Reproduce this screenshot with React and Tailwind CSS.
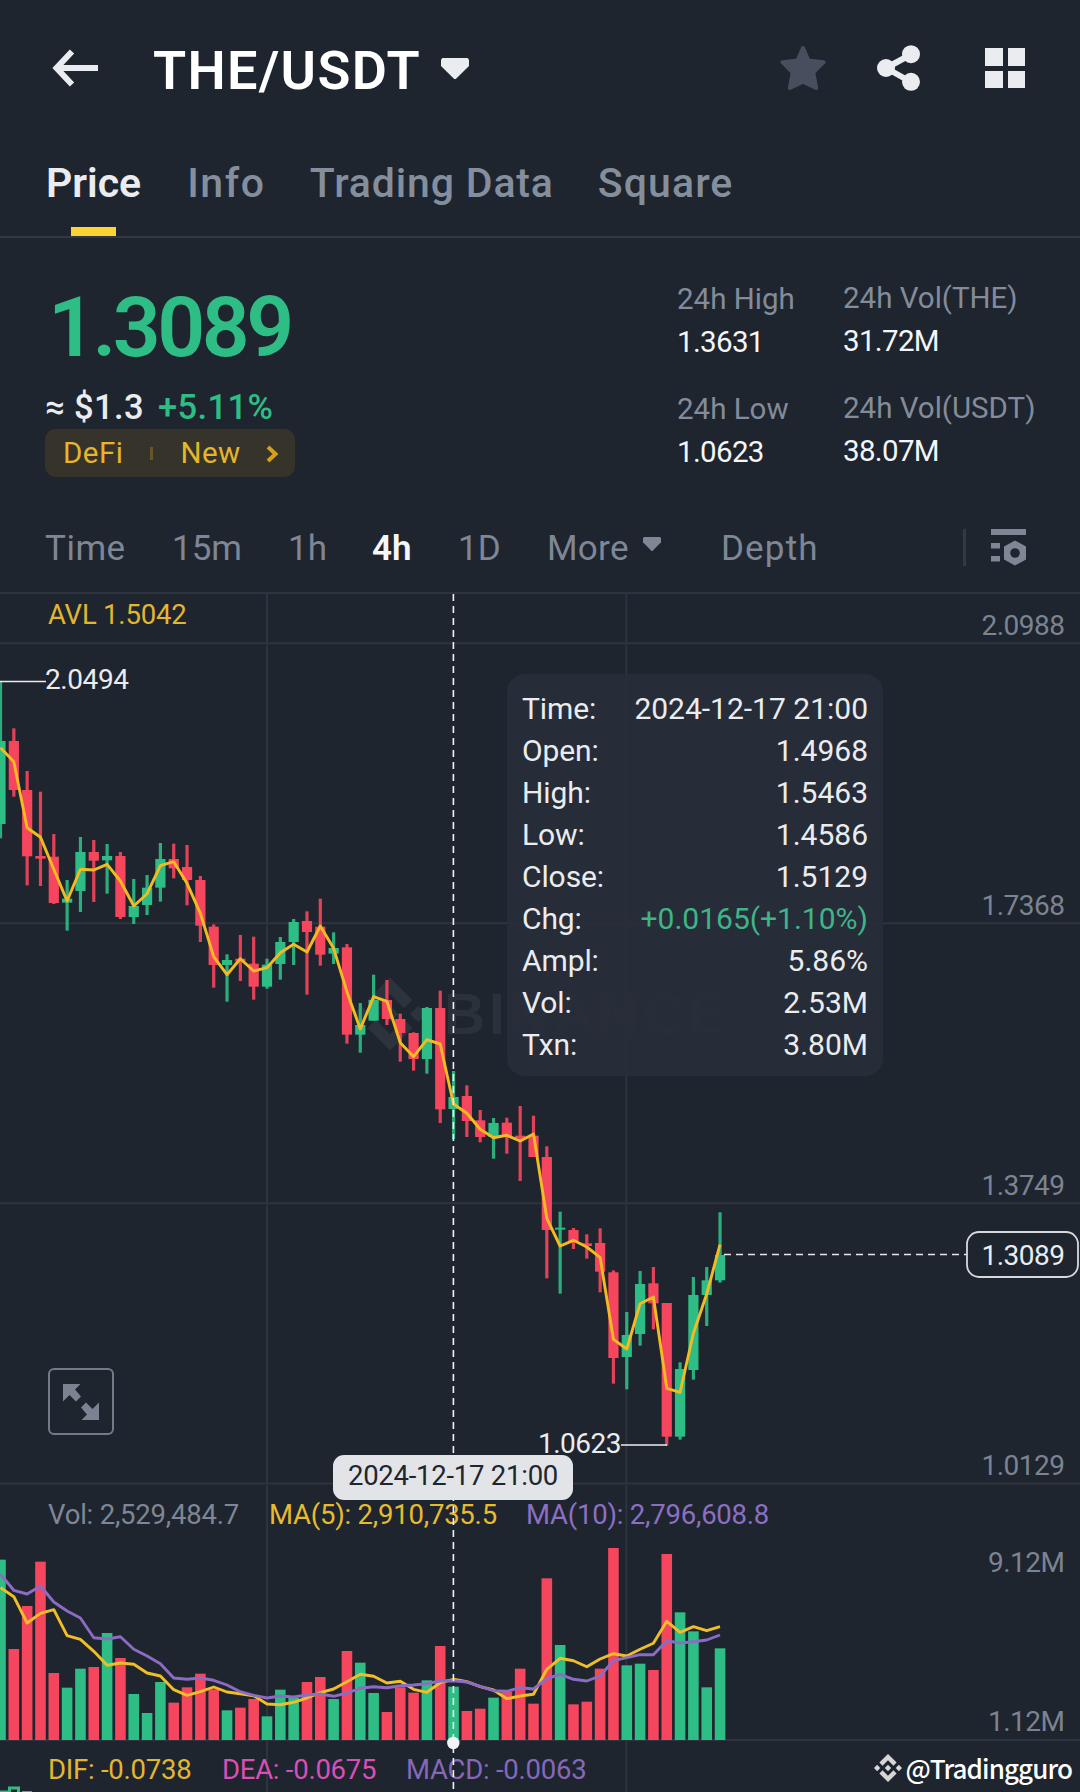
import React from "react";

// [direction, high, bodyTop, bodyBottom, low, average], in thirds of a pixel below y = 590
const CANDLES = [
  ["G", 275, 453, 702, 745, 473], ["R", 415, 453, 600, 620, 515], ["R", 543, 600, 799, 886, 713],
  ["R", 605, 798, 806, 888, 742], ["R", 732, 800, 939, 942, 838], ["G", 870, 926, 938, 1022, 933],
  ["G", 741, 786, 903, 966, 838], ["R", 750, 786, 812, 936, 840], ["G", 762, 798, 811, 911, 823],
  ["R", 786, 798, 981, 987, 873], ["G", 867, 948, 981, 1002, 948], ["G", 855, 893, 945, 975, 911],
  ["G", 759, 807, 893, 935, 827], ["R", 761, 807, 835, 865, 815], ["R", 765, 831, 870, 946, 880],
  ["R", 858, 870, 1007, 1056, 970], ["R", 1003, 1010, 1125, 1193, 1100], ["G", 1093, 1110, 1125, 1235, 1154],
  ["R", 1035, 1106, 1114, 1173, 1106], ["R", 1040, 1121, 1190, 1229, 1143], ["G", 1106, 1124, 1190, 1196, 1133],
  ["G", 1041, 1056, 1122, 1169, 1088], ["G", 987, 996, 1056, 1125, 1063], ["R", 964, 993, 1026, 1214, 1086],
  ["R", 926, 1010, 1094, 1127, 1008], ["G", 1027, 1074, 1091, 1122, 1075], ["R", 1062, 1072, 1334, 1361, 1205],
  ["G", 1239, 1305, 1334, 1388, 1317], ["G", 1154, 1230, 1292, 1292, 1220], ["R", 1170, 1230, 1287, 1305, 1234],
  ["R", 1271, 1287, 1329, 1415, 1358], ["R", 1327, 1329, 1407, 1442, 1400], ["G", 1251, 1254, 1407, 1451, 1349],
  ["R", 1202, 1254, 1558, 1599, 1362], ["G", 1443, 1521, 1557, 1647, 1542], ["R", 1486, 1518, 1593, 1641, 1570],
  ["R", 1560, 1591, 1641, 1657, 1618], ["G", 1584, 1599, 1641, 1706, 1643], ["R", 1583, 1598, 1638, 1691, 1636],
  ["R", 1548, 1637, 1645, 1773, 1653], ["R", 1577, 1637, 1701, 1701, 1632], ["R", 1669, 1701, 1920, 2065, 1885],
  ["G", 1865, 1913, 1919, 2111, 1968], ["R", 1914, 1920, 1955, 1977, 1951], ["R", 1933, 1960, 1968, 2006, 1971],
  ["R", 1915, 1959, 2045, 2107, 2002], ["R", 2041, 2047, 2304, 2381, 2248], ["G", 2166, 2235, 2301, 2398, 2277],
  ["G", 2043, 2082, 2232, 2267, 2141], ["R", 2031, 2080, 2140, 2218, 2121], ["R", 2139, 2139, 2540, 2567, 2395],
  ["G", 2317, 2337, 2540, 2549, 2407], ["G", 2061, 2115, 2340, 2369, 2230], ["G", 2031, 2071, 2115, 2208, 2112],
  ["G", 1867, 1995, 2071, 2078, 1964],
];

// Volume bar tops and the two moving averages, in thirds of a pixel below y = 1520
const VOLUME = [
  119, 387, 258, 125, 459, 503, 446, 441, 339, 414, 522, 579, 486, 548, 502, 461, 508, 571, 563, 537, 589, 509, 534,
  486, 471, 537, 393, 428, 519, 576, 502, 518, 481, 378, 500, 573, 566, 533, 515, 446, 551, 175, 375, 553, 545, 446,
  84, 436, 431, 450, 102, 277, 334, 502, 385,
];
const MA5 = [
  203, 230, 309, 280, 269, 347, 358, 394, 436, 429, 433, 459, 468, 509, 526, 515, 501, 516, 521, 527, 552, 554, 547,
  534, 518, 507, 485, 463, 469, 489, 484, 508, 517, 488, 478, 485, 500, 510, 536, 528, 523, 448, 415, 422, 440, 417,
  401, 408, 388, 370, 304, 337, 320, 332, 320,
];
const MA10 = [
  163, 211, 222, 198, 246, 273, 294, 353, 357, 350, 388, 408, 431, 474, 478, 474, 481, 495, 515, 526, 534, 528, 531,
  525, 522, 529, 519, 505, 500, 503, 497, 495, 491, 483, 482, 486, 499, 512, 514, 503, 507, 476, 463, 478, 483, 468,
  422, 413, 404, 404, 362, 369, 365, 360, 345,
];

const cx = (i) => 0.5 + i * 13.325;
const py = (v) => 590 + v / 3;
const vy = (v) => 1520 + v / 3;
const line = (values, fy) => values.map((v, i) => `${cx(i).toFixed(1)},${fy(v).toFixed(1)}`).join(" ");
const tone = (c) => (c === "G" ? "#2ebd85" : "#f6465d");

const MARK =
  "M38.700 53.200 63.300 28.600 87.900 53.200 102.200 38.900 63.300 0 24.400 38.900ZM0 63.300 14.300 49 28.600 63.300 14.300 77.600ZM38.700 73.400 63.300 98 87.900 73.400 102.200 87.700 63.300 126.600 24.400 87.700ZM98 63.300 112.300 49 126.600 63.300 112.300 77.600ZM77.800 63.300 63.300 48.800 48.800 63.300 63.300 77.800Z";

function CaretDown({ className }) {
  return (
    <svg className={className} viewBox="0 0 28 21" preserveAspectRatio="none" fill="currentColor">
      <path d="M1.500 0H26.500L28 1.500V8L14.800 21H13.200L0 8V1.500Z" />
    </svg>
  );
}

function BinanceMark({ className }) {
  return (
    <svg className={className} viewBox="0 0 126.6 126.6" fill="currentColor">
      <path d={MARK} />
    </svg>
  );
}

function Header() {
  return (
    <header className="flex h-[136px] items-center pl-[52px] pr-[55px] text-[#eaecef]">
      <svg className="h-[38px] w-[46px]" viewBox="0 0 46 38" fill="none" stroke="currentColor" strokeWidth="6">
        <path d="M46 19H5M20 2.500 4.500 19 20 35.500" />
      </svg>
      <h1 className="ml-[55px] mt-[5px] whitespace-nowrap text-[54px] font-semibold leading-none tracking-[1.300px] text-white">
        THE/USDT
      </h1>
      <CaretDown className="ml-[20px] mt-px h-[21px] w-[28px]" />
      <div className="ml-auto flex items-center">
        <svg className="h-[46px] w-[46px] text-[#474f5f]" viewBox="0 0 46 46" fill="currentColor" stroke="currentColor" strokeWidth="4" strokeLinejoin="round">
          <path d="M23 3 28.400 15.600 43.500 17.200 33.200 27.500 36.200 43 23 36.600 9.800 43 12.800 27.500 2.500 17.200 17.600 15.600Z" />
        </svg>
        <svg className="ml-[51px] h-[46px] w-[43px]" viewBox="0 0 43 46" fill="currentColor">
          <path d="M9 23 34 9.500M9 23 34 37" stroke="currentColor" strokeWidth="6" />
          <circle cx="9" cy="23" r="9" />
          <circle cx="34" cy="9.200" r="9" />
          <circle cx="34" cy="36.800" r="9" />
        </svg>
        <div className="ml-[65px] grid grid-cols-2 gap-[5px]">
          <i className="size-[17.500px] bg-current" />
          <i className="size-[17.500px] bg-current" />
          <i className="size-[17.500px] bg-current" />
          <i className="size-[17.500px] bg-current" />
        </div>
      </div>
    </header>
  );
}

function Tabs() {
  return (
    <nav className="flex h-[102px] items-start border-b-2 border-[#333943] pl-[46px] text-[41px] font-medium leading-[48px] text-[#848e9c]">
      <div className="flex h-full flex-col items-center justify-between pt-[23px] font-semibold text-[#eaecef]">
        <span>Price</span>
        <i className="h-[9px] w-[45px] bg-[#fcd535]" />
      </div>
      <span className="ml-[46px] pt-[23px] tracking-[1.600px]">Info</span>
      <span className="ml-[44px] pt-[23px] tracking-[0.850px]">Trading Data</span>
      <span className="ml-[44px] pt-[23px] tracking-[1.100px]">Square</span>
    </nav>
  );
}

function Stat({ label, value }) {
  return (
    <div className="flex flex-col whitespace-nowrap text-[29.500px] leading-[42.500px]">
      <span className="text-[#848b9a]">{label}</span>
      <span className="tracking-[-0.650px] text-[#f5f6f8]">{value}</span>
    </div>
  );
}

function Summary() {
  return (
    <section className="flex h-[264px] pl-[45px]">
      <div className="w-[632px] pt-[42px]">
        <div className="pl-[3px] text-[84px] font-semibold leading-[96px] tracking-[-3.500px] text-[#2ebd85]">1.3089</div>
        <div className="mt-[9px] flex items-center gap-[14px] text-[34.500px] font-medium leading-[44px]">
          <span className="tracking-[0.400px] text-[#eaecef]">≈ $1.3</span>
          <span className="tracking-[0.350px] text-[#2ebd85]">+5.11%</span>
        </div>
        <div className="flex h-[48px] w-[250px] items-center rounded-[11px] bg-[#36332b] pl-[18px] pt-px text-[29.500px] text-[#e6b52b]">
          <span className="tracking-[0.500px]">DeFi</span>
          <i className="ml-[27px] h-[13px] w-[3px] bg-[#66552b]" />
          <span className="ml-[27px] tracking-[0.400px]">New</span>
          <svg className="ml-[25px] h-[18px] w-[13px]" viewBox="0 0 13 18" fill="none" stroke="#d6a116" strokeWidth="4">
            <path d="M2 2 9.500 9 2 16" />
          </svg>
        </div>
      </div>
      <div className="flex w-[166px] flex-col gap-[25px] pt-[40px]">
        <Stat label="24h High" value="1.3631" />
        <Stat label="24h Low" value="1.0623" />
      </div>
      <div className="flex flex-col gap-[25px] pt-[39px]">
        <Stat label="24h Vol(THE)" value="31.72M" />
        <Stat label="24h Vol(USDT)" value="38.07M" />
      </div>
    </section>
  );
}

function Intervals() {
  return (
    <nav className="flex h-[90px] items-center pl-[45px] text-[35px] leading-none text-[#7f8695]">
      <span className="w-[127px] pt-[3px] tracking-[0.500px]">Time</span>
      <span className="w-[116px] pt-[3px]">15m</span>
      <span className="w-[84px] pt-[3px]">1h</span>
      <span className="w-[86px] pt-[3px] font-semibold text-[#f5f6f8]">4h</span>
      <span className="w-[89px] pt-[3px]">1D</span>
      <span className="w-[96px] pt-[3px] tracking-[0.300px]">More</span>
      <CaretDown className="mb-[6px] h-[14px] w-[18px]" />
      <span className="ml-[60px] w-[242px] pt-[3px] tracking-[1.150px]">Depth</span>
      <i className="h-[37px] w-[3px] bg-[#333944]" />
      <svg className="ml-[25px] h-[38px] w-[36px]" viewBox="0 0 36 38" fill="currentColor">
        <path d="M0 1H35V7H0ZM0 15H9V20.500H0ZM0 28H9V33.500H0Z" />
        <path fillRule="evenodd" d="M24 12.500 35 18.500V31.500L24 37.500 13 31.500V18.500ZM24 20.200A4.800 4.800 0 1 0 24 29.800 4.800 4.800 0 1 0 24 20.200Z" />
      </svg>
    </nav>
  );
}

const DETAILS = [
  ["Time:", "2024-12-17 21:00"],
  ["Open:", "1.4968"],
  ["High:", "1.5463"],
  ["Low:", "1.4586"],
  ["Close:", "1.5129"],
  ["Chg:", "+0.0165(+1.10%)"],
  ["Ampl:", "5.86%"],
  ["Vol:", "2.53M"],
  ["Txn:", "3.80M"],
];

const AXIS = [
  ["2.0988", 635], ["1.7368", 915], ["1.3749", 1195], ["1.0129", 1475], ["9.12M", 1571.5], ["1.12M", 1731],
];

function Plot() {
  return (
    <svg className="block h-[1200px] w-[1080px]" viewBox="0 592 1080 1200" fontFamily="Roboto" fontSize="28">
      <g stroke="#2e343f" strokeWidth="2">
        <path d="M0 593H1080M0 643.300H1080M0 923.300H1080M0 1203.300H1080M0 1483.500H1080M0 1740H1080" />
        <path d="M267 593V1792M626.300 593V1792" />
      </g>
      <text x="444" y="1034" fontFamily="Liberation Sans" fontWeight="bold" fontSize="57" fill="#2b313b" textLength="282">
        BINANCE
      </text>
      <path d={MARK} fill="#2d333d" transform="translate(353.500 977.500) scale(0.577)" />
      {CANDLES.map(([c, high, top, bottom, low], i) => (
        <g key={i} fill={tone(c)}>
          <rect x={cx(i) - 1.6} y={py(high)} width="3.2" height={(low - high) / 3} opacity="0.9" />
          <rect x={cx(i) - 5.1} y={py(top)} width="10.2" height={(bottom - top) / 3} />
        </g>
      ))}
      {VOLUME.map((v, i) => (
        <rect key={i} x={cx(i) - 5.3} y={vy(v)} width="10.6" height={1740 - vy(v)} fill={tone(CANDLES[i][0])} />
      ))}
      <g fill="none" strokeWidth="2.9" strokeLinejoin="round">
        <polyline points={line(CANDLES.map((c) => c[5]), py)} stroke="#f3bb22" />
        <polyline points={line(MA5, vy)} stroke="#f0be26" />
        <polyline points={line(MA10, vy)} stroke="#8c6bc4" />
      </g>
      <path d="M0 681.500H46M621 1445H667" stroke="#eaecef" strokeWidth="1.700" />
      <path d="M724 1254.500H967" stroke="#e3e5ea" strokeWidth="1.500" strokeDasharray="7 5" />
      <rect x="967" y="1232" width="111" height="45" rx="12" fill="#1e252f" stroke="#d5d8dd" strokeWidth="1.800" />
      <g fill="#eaecef">
        <text x="45" y="689" textLength="84">2.0494</text>
        <text x="538" y="1453" textLength="83.500">1.0623</text>
        <text x="981.500" y="1265" textLength="83.500">1.3089</text>
      </g>
      <g fill="#7c8391">
        {AXIS.map(([label, y]) => (
          <text key={label} x="1065" y={y} textAnchor="end" textLength={label.endsWith("M") ? 77 : 83.5}>
            {label}
          </text>
        ))}
      </g>
      <path d="M0 1790.500H8V1786.500H20V1792H17V1789.500H11V1792H0ZM22 1791H32V1792H22Z" fill="#2ebd85" />
    </svg>
  );
}

function Chart() {
  return (
    <section className="relative h-[1200px]">
      <Plot />
      <span className="absolute left-[48px] top-[7px] whitespace-nowrap text-[27.500px] leading-[32px] tracking-[-0.200px] text-[#e3b62f]">
        AVL 1.5042
      </span>

      <div className="absolute left-[48px] top-[776px] flex h-[67px] w-[66px] items-center justify-center rounded-[6px] border-2 border-[#737a89] text-[#7b8292]">
        <svg className="size-[38px]" viewBox="0 0 38 38" fill="currentColor">
          <path d="M1 1H18.500L13 6.500 19 13.500 14 18.500 7.500 12 1 18.500ZM37 37H19.500L25 31.500 19 24.500 24 19.500 30.500 26 37 19.500Z" />
        </svg>
      </div>

      <div className="absolute left-[48px] top-[907px] flex whitespace-nowrap text-[27.500px] leading-[32px] tracking-[-0.220px]">
        <span className="w-[221px] text-[#7f8695]">Vol: 2,529,484.7</span>
        <span className="w-[257px] text-[#e8bb2d]">MA(5): 2,910,735.5</span>
        <span className="text-[#8d6fc2]">MA(10): 2,796,608.8</span>
      </div>

      <div className="absolute left-[48px] top-[1162px] flex whitespace-nowrap text-[27.500px] leading-[32px] tracking-[-0.250px]">
        <span className="w-[174px] text-[#e3b62f]">DIF: -0.0738</span>
        <span className="w-[184px] text-[#d94fb6]">DEA: -0.0675</span>
        <span className="text-[#8568ba]">MACD: -0.0063</span>
      </div>

      <svg className="absolute left-[440px] top-0 h-[1200px] w-[27px]" viewBox="440 592 27 1200">
        <path d="M453.400 594V1792" stroke="#f0f1f4" strokeWidth="1.600" strokeDasharray="7 5" />
        <circle cx="453.300" cy="1743" r="6.200" fill="#f2f3f6" />
      </svg>

      <div className="absolute left-[333px] top-[863px] flex h-[45px] w-[240px] items-center justify-center whitespace-nowrap rounded-[11px] bg-[#e2e4e8] pb-[3px] text-[27.500px] tracking-[-0.250px] text-[#20262f]">
        2024-12-17 21:00
      </div>

      <dl className="absolute left-[507px] top-[82px] flex h-[402px] w-[376px] flex-col rounded-[18px] bg-[#282e39]/92 px-[15px] pt-[14px] text-[30px] leading-[42px] text-[#eaecef]">
        {DETAILS.map(([label, value]) => (
          <div key={label} className="flex justify-between whitespace-nowrap">
            <dt className="tracking-[-0.100px]">{label}</dt>
            <dd className={label === "Chg:" ? "text-[#3fb587]" : ""}>{value}</dd>
          </div>
        ))}
      </dl>

      <div className="absolute right-[8px] top-[1157px] flex items-center gap-[4px] text-white">
        <BinanceMark className="size-[28px] text-[#d6d6d6]" />
        <span className="font-['Noto_Sans_CJK_SC',sans-serif] text-[26px] font-medium leading-[38px] tracking-[-0.900px]">@Tradingguro</span>
      </div>
    </section>
  );
}

export default function App() {
  return (
    <main className="h-[1792px] w-[1080px] overflow-hidden bg-[#1e252f] font-['Roboto',sans-serif]">
      <Header />
      <Tabs />
      <Summary />
      <Intervals />
      <Chart />
    </main>
  );
}
